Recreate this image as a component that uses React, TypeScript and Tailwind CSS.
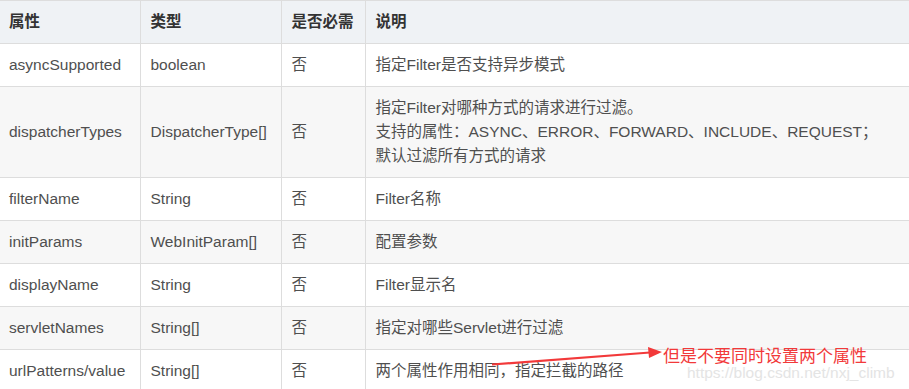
import React from "react";

type Row = { name: string; type: string; req: string; desc: React.ReactNode };

const rows: Row[] = [
  { name: "asyncSupported", type: "boolean", req: "否", desc: "指定Filter是否支持异步模式" },
  {
    name: "dispatcherTypes",
    type: "DispatcherType[]",
    req: "否",
    desc: (
      <>
        指定Filter对哪种方式的请求进行过滤。
        <br />
        支持的属性：ASYNC、ERROR、FORWARD、INCLUDE、REQUEST；
        <br />
        默认过滤所有方式的请求
      </>
    ),
  },
  { name: "filterName", type: "String", req: "否", desc: "Filter名称" },
  { name: "initParams", type: "WebInitParam[]", req: "否", desc: "配置参数" },
  { name: "displayName", type: "String", req: "否", desc: "Filter显示名" },
  { name: "servletNames", type: "String[]", req: "否", desc: "指定对哪些Servlet进行过滤" },
  { name: "urlPatterns/value", type: "String[]", req: "否", desc: "两个属性作用相同，指定拦截的路径" },
];

const cell = "border border-[#dddddd] px-[10px] py-[9px] align-middle";

export default function App() {
  return (
    <div
      className="relative w-[909px] h-[389px] overflow-hidden bg-white text-[15.5px] leading-[24px] text-[#4f4f4f]"
      style={{ fontFamily: '"Liberation Sans", "Noto Sans CJK SC", sans-serif' }}
    >
      <table className="w-[960px] border-collapse table-fixed">
        <colgroup>
          <col className="w-[140px]" />
          <col className="w-[141px]" />
          <col className="w-[84px]" />
          <col />
        </colgroup>
        <thead>
          <tr className="bg-[#eff2f5] text-left text-[#333333]">
            <th className={`${cell} border-l-0 font-bold pl-[9px]`}>属性</th>
            <th className={`${cell} font-bold`}>类型</th>
            <th className={`${cell} font-bold pl-[10px]`}>是否必需</th>
            <th className={`${cell} border-r-0 font-bold`}>说明</th>
          </tr>
        </thead>
        <tbody>
          {rows.map((r, i) => (
            <tr key={r.name} className={i % 2 === 1 ? "bg-[#f7f7f7]" : "bg-white"}>
              <td className={`${cell} border-l-0 pl-[9px] whitespace-nowrap`}>{r.name}</td>
              <td className={`${cell} whitespace-nowrap`}>{r.type}</td>
              <td className={`${cell} pl-[10px]`}>{r.req}</td>
              <td className={`${cell} border-r-0 whitespace-nowrap`}>{r.desc}</td>
            </tr>
          ))}
        </tbody>
      </table>

      {/* red annotation arrow */}
      <svg className="absolute left-0 top-0 pointer-events-none" width="909" height="389">
        <line x1="492" y1="364.5" x2="650" y2="352.5" stroke="#f2393a" strokeWidth="2.2" />
        <polygon points="662,352 648,347 649,358" fill="#f2393a" />
      </svg>
      <div className="absolute left-[663px] top-[347px] text-[17px] leading-[19px] text-[#f2393a] whitespace-nowrap">
        但是不要同时设置两个属性
      </div>
      <div
        className="absolute left-[687px] top-[366px] text-[15.5px] leading-[14px] text-[#e4e4e4] whitespace-nowrap"
        style={{ fontFamily: '"Liberation Sans", sans-serif' }}
      >
        https://blog.csdn.net/nxj_climb
      </div>
    </div>
  );
}
